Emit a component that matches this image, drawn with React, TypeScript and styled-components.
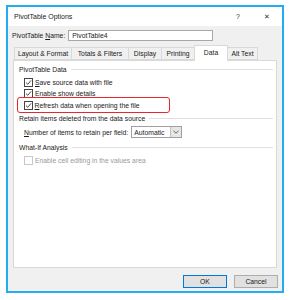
import styled, { createGlobalStyle } from 'styled-components';

const GlobalStyle = createGlobalStyle`
  html, body {
    margin: 0;
    padding: 0;
    background: #fff;
  }
  body {
    font-family: 'Liberation Sans', 'Noto Sans', sans-serif;
    font-size: 6.8px;
    color: #1a1a1a;
  }
`;

function Check({ disabled }: { disabled?: boolean }) {
  return (
    <Box $disabled={disabled}>
      {!disabled && (
        <svg width="7" height="7" viewBox="0 0 7 7">
          <path d="M1 3.6 L2.8 5.3 L6 1.4" fill="none" stroke="#333" strokeWidth="0.9" />
        </svg>
      )}
    </Box>
  );
}

function App() {
  return (
    <>
      <GlobalStyle />
      <Dialog>
        <TitleBar>
          <Title>PivotTable Options</Title>
          <TitleButtons>
            <span>?</span>
            <span>✕</span>
          </TitleButtons>
        </TitleBar>
        <Body>
          <NameRow>
            <span>
              PivotTable <u>N</u>ame:
            </span>
            <NameInput>PivotTable4</NameInput>
          </NameRow>
          <Tabs>
            <Tab $w={58}>Layout &amp; Format</Tab>
            <Tab $w={58}>Totals &amp; Filters</Tab>
            <Tab $w={34}>Display</Tab>
            <Tab $w={34}>Printing</Tab>
            <Tab $w={34} $active>
              Data
            </Tab>
            <Tab $w={31}>Alt Text</Tab>
          </Tabs>
          <Panel>
            <Heading>PivotTable Data</Heading>
            <CheckRow $mt={2}>
              <Check />
              <span>
                <u>S</u>ave source data with file
              </span>
            </CheckRow>
            <CheckRow>
              <Check />
              <span>
                <u>E</u>nable show details
              </span>
            </CheckRow>
            <Highlight>
              <CheckRow>
                <Check />
                <span>
                  <u>R</u>efresh data when opening the file
                </span>
              </CheckRow>
            </Highlight>
            <Heading $mt={-1}>Retain items deleted from the data source</Heading>
            <FieldRow>
              <span>
                <u>N</u>umber of items to retain per field:
              </span>
              <Select>
                <SelectText>Automatic</SelectText>
                <SelectArrow>
                  <svg width="6" height="4" viewBox="0 0 6 4">
                    <path d="M0.5 0.8 L3 3.2 L5.5 0.8" fill="none" stroke="#444" strokeWidth="0.8" />
                  </svg>
                </SelectArrow>
              </Select>
            </FieldRow>
            <Heading $mt={2}>What-If Analysis</Heading>
            <CheckRow $mt={1.5} $disabled>
              <Check disabled />
              <span>Enable cell editing in the values area</span>
            </CheckRow>
          </Panel>
          <Footer>
            <Button $primary>OK</Button>
            <Button>Cancel</Button>
          </Footer>
        </Body>
      </Dialog>
    </>
  );
}

const Dialog = styled.div`
  margin: 5px 0 0 6px;
  width: 274px;
  height: 284px;
  border: 2px solid #22aeee;
  background: #f0f0f0;
  display: flex;
  flex-direction: column;
`;

const TitleBar = styled.div`
  height: 19px;
  background: #fff;
  display: flex;
  align-items: center;
  justify-content: space-between;
  padding: 0 12px 0 6px;
`;

const Title = styled.span`
  font-size: 7px;
`;

const TitleButtons = styled.div`
  display: flex;
  gap: 24px;
  font-size: 7px;
  color: #333;
`;

const Body = styled.div`
  flex: 1;
  display: flex;
  flex-direction: column;
  padding: 3px 5px 3px 5px;
`;

const NameRow = styled.div`
  height: 12px;
  display: flex;
  align-items: center;
  margin-left: -1px;
  gap: 3px;
`;

const NameInput = styled.div`
  width: 145px;
  height: 11px;
  border: 1px solid #a8a8a8;
  background: #fff;
  display: flex;
  align-items: center;
  padding-left: 3px;
  box-sizing: border-box;
`;

const Tabs = styled.div`
  margin-top: 6px;
  padding-left: 1px;
  display: flex;
  align-items: flex-end;
  height: 13px;
  position: relative;
  z-index: 1;
`;

const Tab = styled.div<{ $w: number; $active?: boolean }>`
  width: ${(p) => p.$w}px;
  height: ${(p) => (p.$active ? 16 : 13)}px;
  margin-bottom: ${(p) => (p.$active ? -1 : 0)}px;
  box-sizing: border-box;
  display: flex;
  align-items: center;
  justify-content: center;
  background: ${(p) => (p.$active ? '#fff' : '#f0f0f0')};
  border: 1px solid #d9d9d9;
  border-bottom: ${(p) => (p.$active ? 'none' : '1px solid #d9d9d9')};
  margin-right: -1px;
  padding-bottom: ${(p) => (p.$active ? 2 : 0)}px;
`;

const Panel = styled.div`
  flex: 1;
  background: #fff;
  border: 1px solid #d9d9d9;
  width: 264px;
  box-sizing: border-box;
  padding: 2px 3px 0 5px;
  display: flex;
  flex-direction: column;
`;

const Heading = styled.div<{ $mt?: number }>`
  height: 12px;
  margin-top: ${(p) => p.$mt ?? 0}px;
  display: flex;
  align-items: center;
  gap: 4px;
  &::after {
    content: '';
    flex: 1;
    height: 1px;
    background: #e0e0e0;
  }
`;

const CheckRow = styled.div<{ $mt?: number; $disabled?: boolean }>`
  height: 11px;
  margin-top: ${(p) => p.$mt ?? 0}px;
  padding-left: 5px;
  display: flex;
  align-items: center;
  gap: 2px;
  color: ${(p) => (p.$disabled ? '#9a9a9a' : '#1a1a1a')};
`;

const Box = styled.span<{ $disabled?: boolean }>`
  width: 9px;
  height: 9px;
  box-sizing: border-box;
  border: 1px solid ${(p) => (p.$disabled ? '#c8c8c8' : '#444')};
  background: #fff;
  display: flex;
  align-items: center;
  justify-content: center;
`;

const Highlight = styled.div`
  margin: -2px 0 0 -2px;
  width: 153px;
  height: 16px;
  box-sizing: border-box;
  border: 1.5px solid #e8262e;
  border-radius: 3px;
  padding: 1.5px 0 0 0.5px;
`;

const FieldRow = styled.div`
  height: 14px;
  margin-top: 1px;
  padding-left: 5px;
  display: flex;
  align-items: center;
  gap: 3px;
`;

const Select = styled.div`
  width: 51px;
  height: 12px;
  box-sizing: border-box;
  border: 1px solid #a0a0a0;
  background: #fff;
  display: flex;
  align-items: stretch;
`;

const SelectText = styled.span`
  flex: 1;
  display: flex;
  align-items: center;
  padding-left: 2px;
`;

const SelectArrow = styled.span`
  width: 10px;
  background: #e6e6e6;
  border-left: 1px solid #c0c0c0;
  display: flex;
  align-items: center;
  justify-content: center;
`;

const Footer = styled.div`
  display: flex;
  justify-content: flex-end;
  gap: 7px;
  padding: 7px 0 0 0;
  margin-right: -1px;
`;

const Button = styled.div<{ $primary?: boolean }>`
  width: 44px;
  height: 13px;
  box-sizing: border-box;
  background: #e1e1e1;
  border: 1px solid ${(p) => (p.$primary ? '#0078d7' : '#adadad')};
  display: flex;
  align-items: center;
  justify-content: center;
`;

export default App;
